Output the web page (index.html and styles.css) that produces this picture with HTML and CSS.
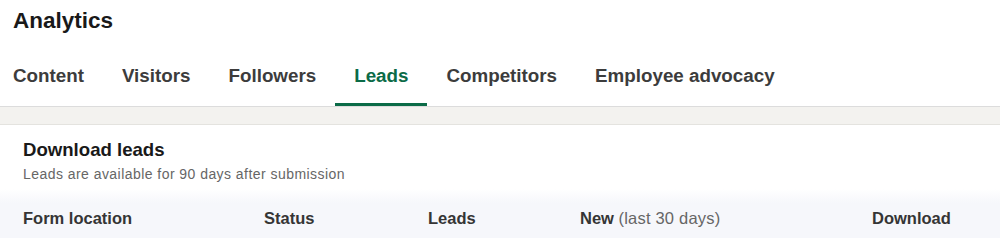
FILE: index.html
```html
<!DOCTYPE html>
<html lang="en">
<head>
  <meta charset="UTF-8" />
  <title>Analytics - Leads</title>
  <link rel="stylesheet" href="styles.css">
</head>
<body>
  <header class="page-header">
    <h1>Analytics</h1>
    <nav class="tabs">
      <a class="tab" href="#">Content</a>
      <a class="tab" href="#">Visitors</a>
      <a class="tab" href="#">Followers</a>
      <a class="tab active" href="#">Leads</a>
      <a class="tab" href="#">Competitors</a>
      <a class="tab" href="#">Employee advocacy</a>
    </nav>
  </header>

  <div class="spacer"></div>

  <section class="card">
    <div class="card-head">
      <h2>Download leads</h2>
      <p>Leads are available for 90 days after submission</p>
    </div>
    <div class="table-head">
      <span>Form location</span>
      <span>Status</span>
      <span>Leads</span>
      <span>New <em>(last 30 days)</em></span>
      <span>Download</span>
    </div>
  </section>
</body>
</html>
```

FILE: styles.css
```css
body {
  margin: 0;
  font-family: "Liberation Sans", Arial, sans-serif;
  background: #fff;
  color: #191919;
}

.page-header {
  background: #fff;
  border-bottom: 1px solid #dcdcdc;
}

.page-header h1 {
  margin: 0;
  padding: 7px 13px 0;
  font-size: 22.5px;
  line-height: 28px;
  font-weight: bold;
  color: #191919;
}

.tabs {
  display: flex;
  padding-left: 13px;
  margin-top: 25px;
}

.tab {
  padding: 0 19px;
  height: 46px;
  line-height: 32px;
  font-size: 18.8px;
  font-weight: bold;
  color: #3c3c3c;
  text-decoration: none;
  box-sizing: border-box;
  border-bottom: 3px solid transparent;
}

.tab:first-child {
  padding-left: 0;
}

.tab.active {
  color: #0b6b47;
  border-bottom-color: #0b6b47;
}

.spacer {
  height: 17px;
  background: #f3f2ef;
  border-bottom: 1px solid #e4e3df;
}

.card {
  background: #fff;
}

.card-head {
  padding: 13px 23px 0;
}

.card-head h2 {
  margin: 0;
  font-size: 18.6px;
  line-height: 24px;
  color: #191919;
}

.card-head p {
  margin: 3px 0 0;
  font-size: 14px;
  line-height: 18px;
  letter-spacing: 0.45px;
  color: #666;
}

.table-head {
  display: grid;
  grid-template-columns: 241px 164px 152px 292px 1fr;
  align-items: center;
  margin-top: 6px;
  padding: 9px 23px 0;
  height: 40px;
  background: linear-gradient(to bottom, #fff 0, #f6f7fb 14px, #f6f7fb 100%);
  font-size: 16.5px;
  font-weight: bold;
  color: #353535;
}

.table-head em {
  font-style: normal;
  font-weight: normal;
  color: #666;
  letter-spacing: 0.2px;
}
```
